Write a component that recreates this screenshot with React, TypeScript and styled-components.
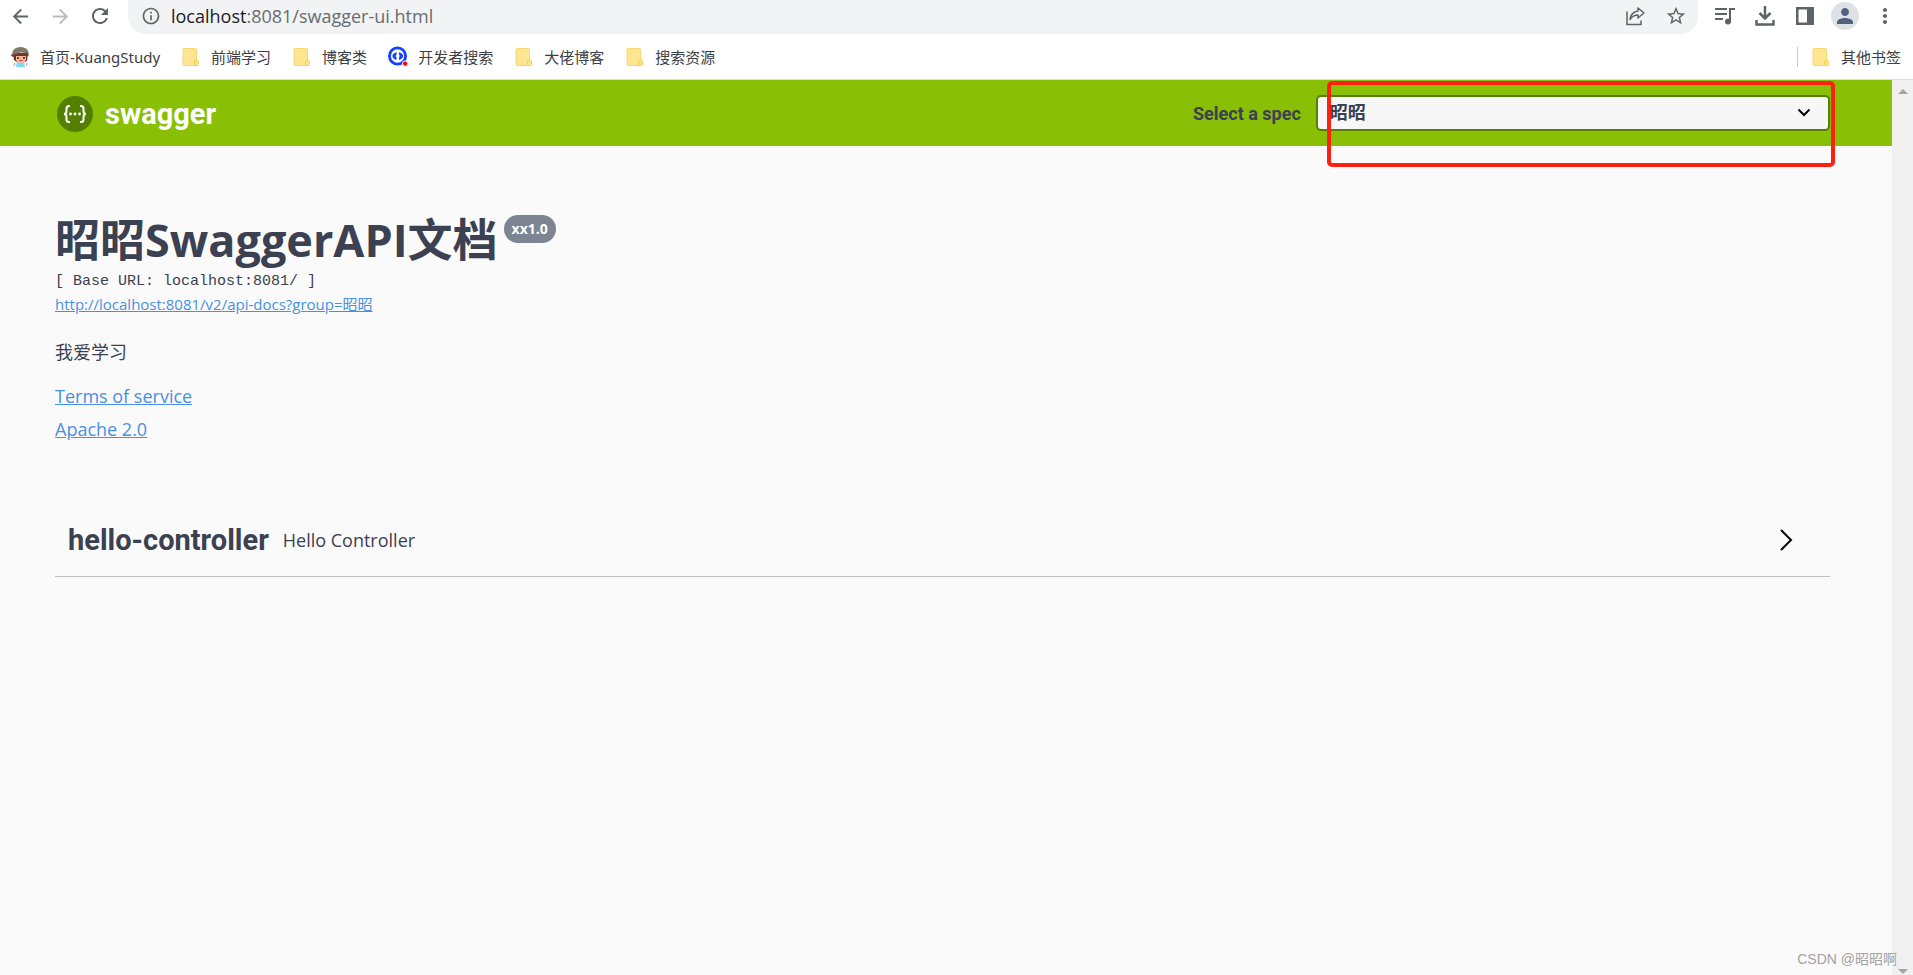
import React from 'react';
import styled, { createGlobalStyle } from 'styled-components';
import {
  MdArrowBack,
  MdArrowForward,
  MdInfoOutline,
  MdMoreVert,
  MdPerson,
  MdRefresh,
  MdStarBorder,
} from 'react-icons/md';

const bodyFont = `'Open Sans', 'Noto Sans CJK SC', sans-serif`;
const bookmarkFont = `'Noto Sans', 'Noto Sans CJK SC', sans-serif`;
const headingFont = `Roboto, 'Noto Sans CJK SC', sans-serif`;
const ink = '#3b4151';
const linkBlue = '#4990e2';

const GlobalStyle = createGlobalStyle`
  *, *::before, *::after { box-sizing: border-box; }
  body {
    margin: 0;
    background: #fafafa;
    color: ${ink};
    font-family: ${bodyFont};
  }
`;

const Shell = styled.div`
  position: relative;
  display: flex;
  flex-direction: column;
  min-height: 100vh;
`;

const Toolbar = styled.header`
  display: flex;
  align-items: center;
  height: 34px;
  padding: 0 16px 2px 8px;
  background: #fff;
  color: #5f6368;
`;

const IconButton = styled.button<{ $dim?: boolean; $size?: number }>`
  display: flex;
  flex: none;
  align-items: center;
  justify-content: center;
  width: ${(p) => p.$size ?? 24}px;
  height: ${(p) => p.$size ?? 24}px;
  padding: 0;
  border: 0;
  background: none;
  color: ${(p) => (p.$dim ? '#babcbe' : '#5f6368')};
`;

const NavGroup = styled.div`
  display: flex;
  gap: 16px;
  width: 120px;
`;

const AddressBar = styled.div`
  display: flex;
  flex: 1;
  align-items: center;
  align-self: flex-start;
  height: 34px;
  padding: 0 10px 2px 12px;
  border-radius: 0 0 17px 17px;
  background: #f1f3f4;
`;

const Url = styled.div`
  flex: 1;
  padding-left: 9px;
  font-size: 18px;
  line-height: 24px;
  color: #696c70;

  span { color: #202124; }
`;

const AddressActions = styled.div`
  display: flex;
  gap: 16px;
`;

const ToolGroup = styled.div`
  display: flex;
  align-items: center;
  gap: 16px;
  padding-left: 15px;
`;

const Avatar = styled.button`
  display: flex;
  align-items: center;
  justify-content: center;
  width: 28px;
  height: 28px;
  margin: 0 -2px;
  padding: 0;
  border: 0;
  border-radius: 50%;
  background: #dee1e6;
  color: #54617c;
`;

const Bookmarks = styled.nav`
  display: flex;
  align-items: center;
  gap: 21px;
  height: 46px;
  padding: 0 12px 0 10px;
  border-bottom: 1px solid #dadce0;
  background: #fff;
`;

const Bookmark = styled.a`
  display: flex;
  align-items: center;
  gap: 10px;
  color: #3c4043;
  font: 400 15px/20px ${bookmarkFont};
  text-decoration: none;
  white-space: nowrap;
`;

const Favicon = styled.span`
  display: flex;
  flex: none;
  justify-content: center;
  width: 20px;
`;

const OtherBookmarks = styled.div`
  margin-left: auto;
  padding-left: 13px;
  border-left: 1px solid #c8cacd;
`;

const Viewport = styled.div`
  display: flex;
  flex: 1;
`;

const Page = styled.main`
  flex: 1;
  min-width: 0;
`;

const ScrollTrack = styled.div`
  display: flex;
  flex: none;
  flex-direction: column;
  align-items: center;
  justify-content: space-between;
  width: 21px;
  padding: 9px 0 1px;
  background: #f0f0f0;
`;

const TopBar = styled.div`
  display: flex;
  align-items: center;
  justify-content: space-between;
  height: 66px;
  padding: 0 62px 0 55px;
  background: #89bf04;
`;

const Brand = styled.a`
  display: flex;
  align-items: center;
  gap: 12px;
  padding: 2px 0 0 2px;
  color: #fff;
  font: 700 29px/36px ${headingFont};
  text-decoration: none;
`;

const SpecPicker = styled.div`
  display: flex;
  align-items: center;
  gap: 15px;
  width: 637px;
`;

const SpecLabel = styled.label`
  flex: none;
  padding-top: 2px;
  font: 700 18px/24px ${headingFont};
`;

const SelectWrap = styled.div`
  position: relative;
  flex: 1;
`;

const Select = styled.select`
  display: block;
  width: 100%;
  height: 36px;
  padding: 0 40px 2px 12px;
  border: 2px solid #547f00;
  border-radius: 5px;
  background: #f7f7f7;
  color: ${ink};
  font: 700 18px/24px ${bodyFont};
  appearance: none;
`;

const SelectChevron = styled.svg`
  position: absolute;
  top: 13px;
  right: 19px;
  pointer-events: none;
`;

const Highlight = styled.div`
  position: absolute;
  inset: -14px -5px -36px 11px;
  border: 4px solid #ff2010;
  border-radius: 5px;
  pointer-events: none;
`;

const Content = styled.div`
  padding: 62px 62px 0 55px;
`;

const Info = styled.section`
  display: flex;
  flex-direction: column;
  align-items: flex-start;
`;

const TitleRow = styled.div`
  display: flex;
  align-items: flex-start;
  gap: 6px;
`;

const Title = styled.h1`
  margin: 0;
  font-size: 45px;
  font-weight: 700;
  line-height: 64px;
`;

const Version = styled.span`
  margin-top: 7px;
  padding: 4px 8px;
  border-radius: 14px;
  background: #7d8492;
  color: #fff;
  font-size: 14px;
  font-weight: 700;
  line-height: 20px;
`;

const BaseUrl = styled.code`
  font: 400 15px/20px 'Liberation Mono', monospace;
`;

const DocLink = styled.a<{ $small?: boolean }>`
  color: ${linkBlue};
  font-size: ${(p) => (p.$small ? 15 : 18)}px;
  line-height: 24px;
`;

const Description = styled.p`
  margin: 24px 0 20px;
  font-size: 18px;
  line-height: 24px;
`;

const LinkList = styled.div`
  display: flex;
  flex-direction: column;
  align-items: flex-start;
  gap: 9px;
`;

const TagButton = styled.button`
  display: flex;
  align-items: center;
  width: 100%;
  height: 73px;
  margin-top: 63px;
  padding: 0 32px 0 13px;
  border: 0;
  border-bottom: 1px solid #bebfc2;
  background: none;
  color: ${ink};
  text-align: left;
`;

const TagName = styled.span`
  font: 700 29px/36px ${headingFont};
`;

const TagNote = styled.span`
  flex: 1;
  padding-left: 14px;
  font: 400 18px/24px ${bodyFont};
`;

const Watermark = styled.div`
  position: absolute;
  right: 16px;
  bottom: 6px;
  color: #a3a3a3;
  font: 400 14px/20px 'Liberation Sans', 'Noto Sans CJK SC', sans-serif;
`;

const FolderIcon = () => (
  <svg width="18" height="20" viewBox="0 0 18 20" aria-hidden="true">
    <path d="M2 1.500h11.500a1 1 0 0 1 1 1V18.500H2a1 1 0 0 1-1-1v-15a1 1 0 0 1 1-1z" fill="#ffe591" stroke="#f7d774" />
    <rect x="12.500" y="13.500" width="4" height="5" rx="1" fill="#ffe591" stroke="#f3cd52" />
  </svg>
);

const BoyIcon = () => (
  <svg width="20" height="22" viewBox="0 0 20 22" aria-hidden="true">
    <path d="M7 15h7l1 6H6z" fill="#7fdcf5" />
    <path d="M5 17l-1 3M16 17l1 3" stroke="#f0b49a" strokeWidth="1.500" />
    <path d="M3 7h15l-1 8-2 1H7l-3-2z" fill="#6b2f26" />
    <path d="M6 10h10v4q-1 3-5 3t-5-3z" fill="#f6b796" />
    <path d="M8 11v2M14 11v2" stroke="#4a1d18" strokeWidth="1.500" />
    <path d="M9.500 14.500h3" stroke="#b63a30" />
    <path d="M2 8Q3 1 10.500 1T19 8q-4-2-9-1.500L3 10 .5 9z" fill="#837866" />
    <path d="M1 9.500Q7 6 18.500 8v2Q9 8 3 11z" fill="#713b2d" />
  </svg>
);

const DevSearchIcon = () => (
  <svg width="21" height="21" viewBox="0 0 21 21" aria-hidden="true">
    <circle cx="10" cy="10" r="8.500" fill="#fff" stroke="#1440ff" strokeWidth="3" />
    <path d="M9 6v2.500L8 10l1 1.500V14Q5.500 13.500 4.500 10 5.500 6.500 9 6z M11.500 6v2.500l1 1.500-1 1.500V14q3.500-.5 4.500-4-1-3.500-4.500-4z" fill="#1440ff" />
    <circle cx="18" cy="18" r="2.800" fill="#f00a18" stroke="#fff" />
  </svg>
);

const ShareIcon = () => (
  <svg width="22" height="22" viewBox="0 0 22 22" fill="none" stroke="currentColor" strokeWidth="1.500" aria-hidden="true">
    <path d="M2 6.500v13h14v-4" />
    <path d="M13 3l6 5-6 5v-3Q8 10 5 14.500 6 7 13 6z" strokeLinejoin="round" />
  </svg>
);

const PlaylistIcon = () => (
  <svg width="22" height="20" viewBox="0 0 22 20" aria-hidden="true">
    <path d="M1 3h12M1 8h12M1 13h8" stroke="currentColor" strokeWidth="2" />
    <path d="M16 15V3h5" fill="none" stroke="currentColor" strokeWidth="2" />
    <circle cx="14" cy="15.500" r="3" fill="currentColor" />
  </svg>
);

const DownloadIcon = () => (
  <svg width="22" height="22" viewBox="0 0 22 22" fill="none" stroke="currentColor" strokeWidth="2.500" aria-hidden="true">
    <path d="M11 1v12M5.500 8l5.500 5.500L16.500 8M2.500 15v4.500h17V15" />
  </svg>
);

const SidePanelIcon = () => (
  <svg width="18" height="18" viewBox="0 0 18 18" aria-hidden="true">
    <path d="M0 0h18v18H0z M2.500 2.500v13H11v-13z" fill="currentColor" fillRule="evenodd" />
  </svg>
);

const SwaggerMark = () => (
  <svg width="36" height="36" viewBox="0 0 36 36" fill="none" aria-hidden="true">
    <circle cx="18" cy="18" r="18" fill="#547f00" />
    <path
      d="M13 10h-1q-2.500 0-2.500 2.500V15q0 3-2.500 3 2.500 0 2.500 3v2.500Q9.500 26 12 26h1M23 10h1q2.500 0 2.500 2.500V15q0 3 2.500 3-2.500 0-2.500 3v2.500Q26.500 26 24 26h-1"
      stroke="#fff"
      strokeWidth="2"
    />
    <g fill="#fff">
      <circle cx="13.500" cy="18" r="1.400" />
      <circle cx="18" cy="18" r="1.400" />
      <circle cx="22.500" cy="18" r="1.400" />
    </g>
  </svg>
);

const ScrollArrow = ({ down = false }: { down?: boolean }) => (
  <svg width="10" height="5" viewBox="0 0 10 5" aria-hidden="true">
    <path d={down ? 'M0 0h10L5 5z' : 'M0 5h10L5 0z'} fill="#a3a3a3" />
  </svg>
);

const bookmarks = [
  { label: '首页-KuangStudy', Icon: BoyIcon },
  { label: '前端学习', Icon: FolderIcon },
  { label: '博客类', Icon: FolderIcon },
  { label: '开发者搜索', Icon: DevSearchIcon },
  { label: '大佬博客', Icon: FolderIcon },
  { label: '搜索资源', Icon: FolderIcon },
];

export default function App() {
  return (
    <Shell>
      <GlobalStyle />
      <Toolbar>
        <NavGroup>
          <IconButton aria-label="Back"><MdArrowBack size={23} /></IconButton>
          <IconButton aria-label="Forward" $dim><MdArrowForward size={23} /></IconButton>
          <IconButton aria-label="Reload"><MdRefresh size={24} /></IconButton>
        </NavGroup>
        <AddressBar>
          <IconButton aria-label="Site information" $size={22}><MdInfoOutline size={20} /></IconButton>
          <Url><span>localhost</span>:8081/swagger-ui.html</Url>
          <AddressActions>
            <IconButton aria-label="Share"><ShareIcon /></IconButton>
            <IconButton aria-label="Bookmark this page"><MdStarBorder size={22} /></IconButton>
          </AddressActions>
        </AddressBar>
        <ToolGroup>
          <IconButton aria-label="Media"><PlaylistIcon /></IconButton>
          <IconButton aria-label="Downloads"><DownloadIcon /></IconButton>
          <IconButton aria-label="Side panel"><SidePanelIcon /></IconButton>
          <Avatar aria-label="Profile"><MdPerson size={24} /></Avatar>
          <IconButton aria-label="Menu"><MdMoreVert size={24} /></IconButton>
        </ToolGroup>
      </Toolbar>
      <Bookmarks>
        {bookmarks.map(({ label, Icon }) => (
          <Bookmark key={label} href="#"><Favicon><Icon /></Favicon>{label}</Bookmark>
        ))}
        <OtherBookmarks>
          <Bookmark href="#"><Favicon><FolderIcon /></Favicon>其他书签</Bookmark>
        </OtherBookmarks>
      </Bookmarks>
      <Viewport>
        <Page>
          <TopBar>
            <Brand href="#"><SwaggerMark />swagger</Brand>
            <SpecPicker>
              <SpecLabel htmlFor="spec">Select a spec</SpecLabel>
              <SelectWrap>
                <Select id="spec"><option>昭昭</option></Select>
                <SelectChevron width="14" height="10" viewBox="0 0 14 10" fill="none" stroke="#000" strokeWidth="2">
                  <path d="M1.500 1.500L7 7l5.500-5.500" />
                </SelectChevron>
                <Highlight />
              </SelectWrap>
            </SpecPicker>
          </TopBar>
          <Content>
            <Info>
              <TitleRow>
                <Title>昭昭SwaggerAPI文档</Title>
                <Version>xx1.0</Version>
              </TitleRow>
              <BaseUrl>[ Base URL: localhost:8081/ ]</BaseUrl>
              <DocLink href="#" $small>http://localhost:8081/v2/api-docs?group=昭昭</DocLink>
              <Description>我爱学习</Description>
              <LinkList>
                <DocLink href="#">Terms of service</DocLink>
                <DocLink href="#">Apache 2.0</DocLink>
              </LinkList>
            </Info>
            <TagButton aria-expanded={false}>
              <TagName>hello-controller</TagName>
              <TagNote>Hello Controller</TagNote>
              <svg width="24" height="24" viewBox="0 0 24 24" fill="none" stroke="#000" strokeWidth="2" aria-hidden="true">
                <path d="M7 2l10 10L7 22" />
              </svg>
            </TagButton>
          </Content>
        </Page>
        <ScrollTrack>
          <ScrollArrow />
          <ScrollArrow down />
        </ScrollTrack>
      </Viewport>
      <Watermark>CSDN @昭昭啊</Watermark>
    </Shell>
  );
}
